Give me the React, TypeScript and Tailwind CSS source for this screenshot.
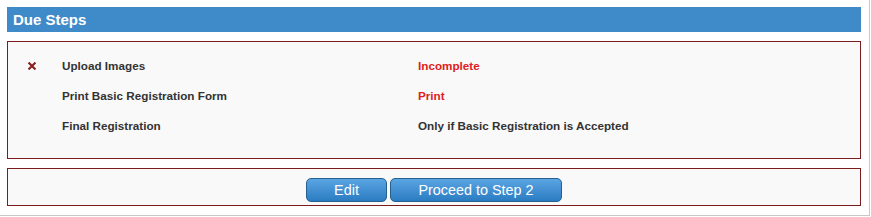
import React from "react";

const rows = [
  { mark: true, label: "Upload Images", status: "Incomplete", red: true },
  { mark: false, label: "Print Basic Registration Form", status: "Print", red: true },
  { mark: false, label: "Final Registration", status: "Only if Basic Registration is Accepted", red: false },
];

function XMark() {
  return (
    <svg width="8" height="8" viewBox="0 0 8 8">
      <path d="M1.3 1.3 L6.7 6.7 M6.7 1.3 L1.3 6.7" stroke="#8a1d1d" strokeWidth="2.1" strokeLinecap="square" />
    </svg>
  );
}

export default function App() {
  return (
    <div className="w-[871px] h-[217px] bg-white" style={{ fontFamily: '"Liberation Sans", Arial, sans-serif' }}>
      <div className="w-[870px] h-[216px] border-r border-b border-[#c8c8c8] px-[7px] pt-[7px] pr-[8px]">
        <div className="h-[25px] bg-[#3f8bca] flex items-center pl-[6px]">
          <span className="text-white font-bold text-[15px] leading-none">Due Steps</span>
        </div>
        <div className="mt-[9px] h-[118px] border border-[#7b1c1c] bg-[#f9f9f9] pt-[9px]">
          {rows.map((r, i) => (
            <div key={i} className="h-[30px] flex items-center text-[11.7px] font-bold">
              <div className="w-[54px] flex justify-start pl-[20px]">{r.mark ? <XMark /> : null}</div>
              <div className="w-[356px] text-[#333333]">{r.label}</div>
              <div className={r.red ? "text-[#e02020]" : "text-[#333333]"}>{r.status}</div>
            </div>
          ))}
        </div>
        <div className="mt-[9px] h-[38px] border border-[#7b1c1c] bg-[#f9f9f9] flex items-start justify-center gap-[3px] pt-[9px]">
          <button className="w-[81px] h-[24px] rounded-[5px] border border-[#26608f] bg-gradient-to-b from-[#5aa5e3] to-[#2a7cc2] text-white text-[14.4px] leading-none">
            Edit
          </button>
          <button className="w-[172px] h-[24px] rounded-[5px] border border-[#26608f] bg-gradient-to-b from-[#5aa5e3] to-[#2a7cc2] text-white text-[14.4px] leading-none">
            Proceed to Step 2
          </button>
        </div>
      </div>
    </div>
  );
}
